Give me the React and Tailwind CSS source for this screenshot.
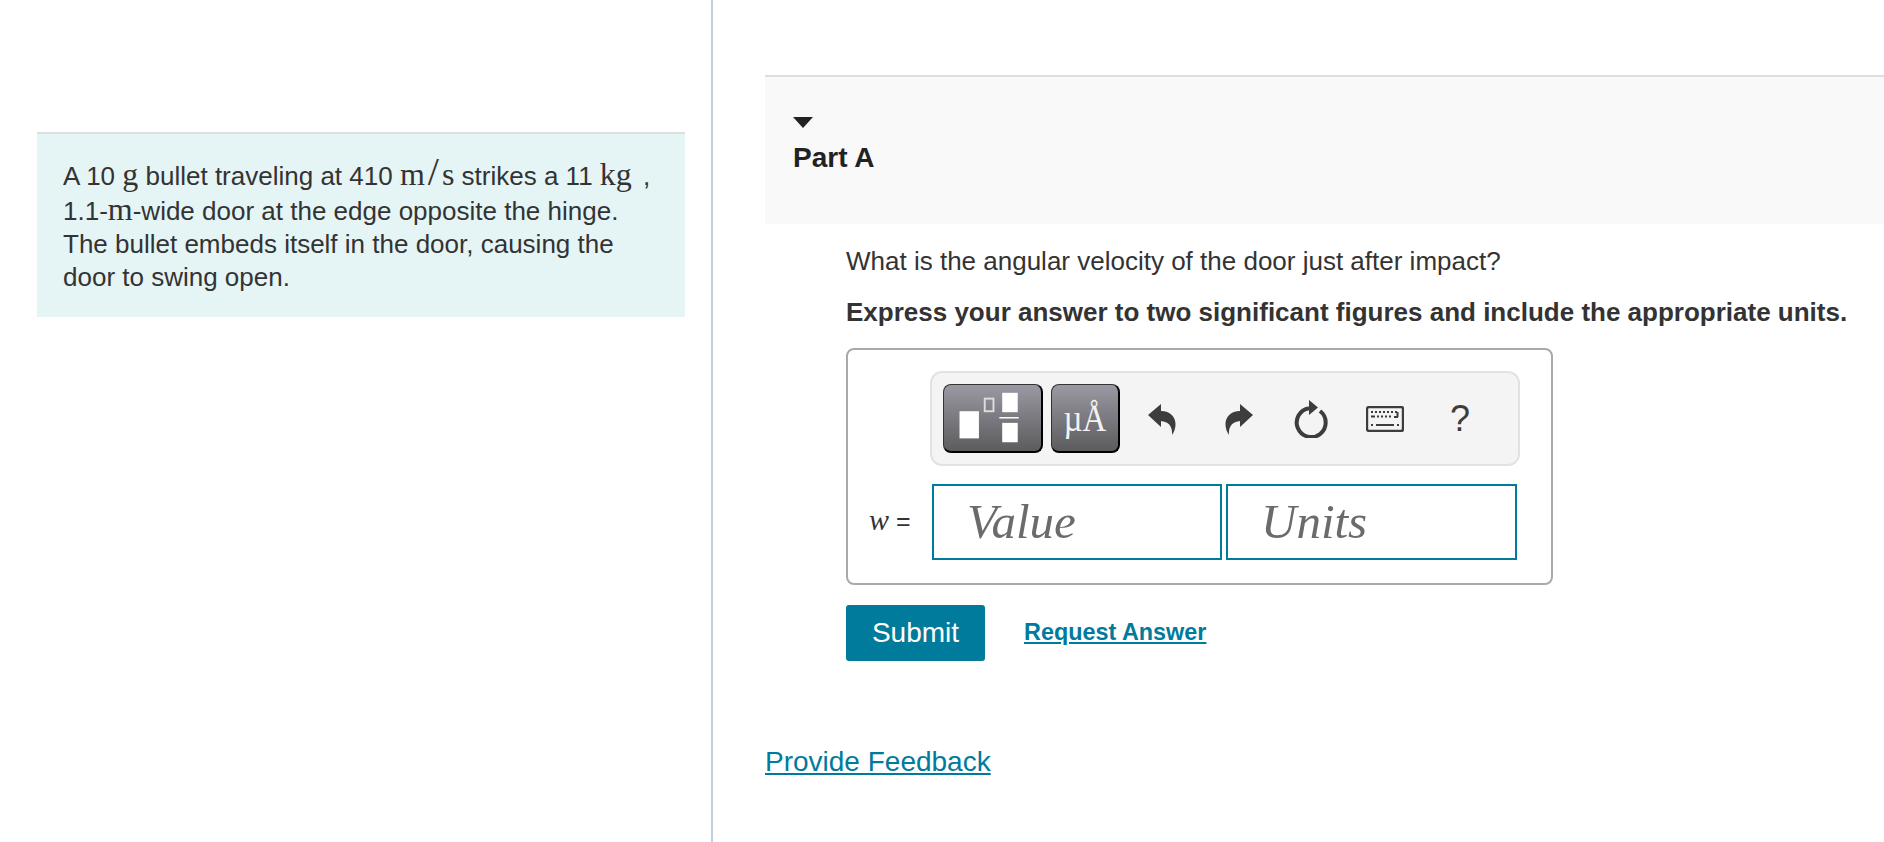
import React from 'react';

const serif = "font-['Liberation_Serif',serif]";
const math = `${serif} text-[32px] leading-none`;

const TemplateIcon = () => (
  <svg width="100" height="69" viewBox="0 0 100 69" className="block">
    <rect x="16" y="27" width="20" height="28" fill="#fff" />
    <rect x="42" y="14" width="9" height="13" fill="none" stroke="#ddd" strokeWidth="2" />
    <rect x="60" y="8" width="16" height="20" fill="#fff" />
    <rect x="57" y="33" width="20" height="1.5" fill="#fff" />
    <rect x="60" y="39" width="16" height="20" fill="#fff" />
  </svg>
);

const UndoIcon = ({ flip }) => (
  <svg width="28" height="32" viewBox="0 0 28 32" className={flip ? '-scale-x-100' : ''}>
    <path d="M0 12 L13 1 L13 8 C22 8 28 14 27.5 22 C27.3 26 26 29 24 32 C24.5 26 23 19 13 18 L13 24 Z" fill="#3d3d3d" />
  </svg>
);

const ResetIcon = () => (
  <svg width="34" height="38" viewBox="0 0 34 38">
    <path d="M15 8.2 A14.5 14.5 0 1 0 26 11" fill="none" stroke="#3d3d3d" strokeWidth="4" />
    <path d="M15 0 L24 7.5 L15 15 Z" fill="#3d3d3d" />
  </svg>
);

const KeyboardIcon = () => (
  <svg width="38" height="26" viewBox="0 0 38 26">
    <rect x="1" y="1" width="36" height="24" rx="2" fill="#f4f4f4" stroke="#3d3d3d" strokeWidth="2.4" />
    <path d="M5 6h2M9 6h2M13 6h2M17 6h2M21 6h2M25 6h2M29 6h2M5 10.5h4M11 10.5h2M15 10.5h2M19 10.5h2M23 10.5h2M28 11h4M31.5 6v5M5 19h2M10 19h18M31 19h2" stroke="#3d3d3d" strokeWidth="2" fill="none" />
  </svg>
);

const ToolbarButton = ({ className, children }) => (
  <div className={`flex items-center justify-center h-[69px] rounded-lg border border-[#333] border-r-2 border-b-2 border-r-black border-b-black bg-linear-to-b from-[#9b99a3] to-[#5c5c5e] ${className}`}>
    {children}
  </div>
);

const App = () => {
  return (
    <div className="flex h-[842px] w-full overflow-hidden bg-white font-['Liberation_Sans',sans-serif] text-[#333]">
      {/* Intro column */}
      <div className="w-[713px] shrink-0 border-r-2 border-[#bcd0e4] pl-[37px] pr-[26px] pt-[132px]">
        <div className="h-[185px] border-t-2 border-[#dedede] bg-[#e5f5f6] pl-[26px] pt-[18px] text-[26px] leading-[33px]">
          <p className="whitespace-nowrap">
            A 10 <span className={math}>g</span> bullet traveling at 410{' '}
            <span className={math}>m<span className="px-[3px] text-[40px] font-light">/</span>s</span> strikes a 11{' '}
            <span className={`${math} mr-1`}>kg</span> ,<br />
            1.1-<span className={math}>m</span>-wide door at the edge opposite the hinge.
            <br />
            The bullet embeds itself in the door, causing the
            <br />
            door to swing open.
          </p>
        </div>
      </div>

      {/* Part column */}
      <div className="flex-1 pl-[52px] pt-[75px]">
        <div className="h-[149px] border-t-2 border-[#dedede] bg-[#f9f9f9] pl-[28px] pt-[40px]">
          <div className="h-0 w-0 border-x-[10.5px] border-t-[11px] border-x-transparent border-t-[#222]" />
          <h2 className="mt-[13px] text-[28px] font-bold leading-[34px] text-[#222]">Part A</h2>
        </div>

        <div className="pl-[81px]">
          <p className="mt-[21px] text-[26px] leading-[33px]">What is the angular velocity of the door just after impact?</p>
          <p className="mt-[18px] whitespace-nowrap text-[26px] font-bold leading-[33px]">
            Express your answer to two significant figures and include the appropriate units.
          </p>

          <div className="mt-[19px] h-[237px] w-[707px] rounded-lg border-2 border-[#a9a9a9] pl-[21px] pt-[21px]">
            <div className="ml-[61px] flex h-[95px] w-[590px] items-center rounded-xl border-2 border-[#e2e2e2] bg-[#f4f4f4] pl-[11px]">
              <ToolbarButton className="w-[100px]">
                <TemplateIcon />
              </ToolbarButton>
              <ToolbarButton className="ml-[8px] w-[69px]">
                <span className={`${serif} scale-y-[1.17] text-[33px] leading-none text-[#f2f2f2]`}>µÅ</span>
              </ToolbarButton>
              <div className="ml-[28px] flex items-center">
                <UndoIcon />
                <div className="ml-[49px]"><UndoIcon flip /></div>
                <div className="ml-[41px]"><ResetIcon /></div>
                <div className="ml-[38px]"><KeyboardIcon /></div>
                <span className="ml-[46px] mt-px text-[36px] leading-none text-[#3d3d3d]">?</span>
              </div>
            </div>

            <div className="mt-[18px] flex h-[76px] items-center">
              <span className="w-[63px] shrink-0 whitespace-nowrap text-[25px]">
                <i className={`${serif} text-[30px] leading-none`}>w</i> =
              </span>
              <div className={`flex h-[76px] w-[290px] items-center border-2 border-[#007b9c] pl-[33px] ${serif} text-[49px] italic text-[#6b6b6b]`}>
                Value
              </div>
              <div className={`ml-[4px] flex h-[76px] w-[291px] items-center border-2 border-[#007b9c] pl-[33px] ${serif} text-[49px] italic text-[#6b6b6b]`}>
                Units
              </div>
            </div>
          </div>

          <div className="mt-[20px] flex items-center">
            <button className="h-[56px] w-[139px] rounded-[3px] bg-[#007b9c] text-[28px] text-white">Submit</button>
            <a className="ml-[39px] text-[23.4px] font-bold text-[#007b9c] underline">Request Answer</a>
          </div>
        </div>

        <a className="mt-[84px] block w-fit text-[28px] leading-[34px] text-[#007b9c] underline">Provide Feedback</a>
      </div>
    </div>
  );
};

export default App;
